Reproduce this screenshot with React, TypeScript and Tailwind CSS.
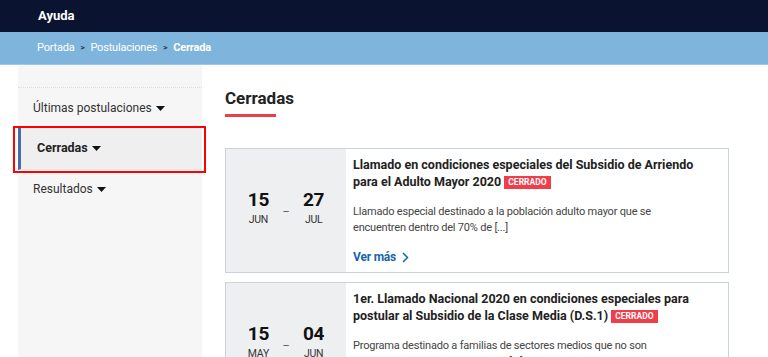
import React from 'react'

const font = { fontFamily: 'Roboto, "Noto Sans", sans-serif' }

type Llamado = {
  from: [string, string]
  to: [string, string]
  title: string[]
  text: string[]
}

const llamados: Llamado[] = [
  {
    from: ['15', 'JUN'],
    to: ['27', 'JUL'],
    title: ['Llamado en condiciones especiales del Subsidio de Arriendo', 'para el Adulto Mayor 2020'],
    text: ['Llamado especial destinado a la población adulto mayor que se', 'encuentren dentro del 70% de [...]'],
  },
  {
    from: ['15', 'MAY'],
    to: ['04', 'JUN'],
    title: ['1er. Llamado Nacional 2020 en condiciones especiales para', 'postular al Subsidio de la Clase Media (D.S.1)'],
    text: ['Programa destinado a familias de sectores medios que no son', 'propietarios de una vivienda, que [...]'],
  },
]

function Caret() {
  return (
    <svg width="9" height="5" viewBox="0 0 9 5" className="ml-[4px] inline-block">
      <path d="M0 0h9L4.5 5z" fill="#111" />
    </svg>
  )
}

function DateBox({ d }: { d: [string, string] }) {
  return (
    <div className="flex flex-col items-center w-[30px]">
      <span className="text-[19px] font-bold leading-[20px] text-[#111] tracking-[-0.3px]">{d[0]}</span>
      <span className="text-[10.5px] leading-[14px] text-[#333] mt-[3px] tracking-[-0.3px]">{d[1]}</span>
    </div>
  )
}

function Card({ item }: { item: Llamado }) {
  return (
    <div className="flex border border-[#c9d3de] mb-[9px]">
      <div className="w-[120px] shrink-0 bg-[#eeeff1] flex items-center justify-center gap-[9px] pb-[4px]">
        <DateBox d={item.from} />
        <span className="text-[11px] text-[#555] mt-[8px]">–</span>
        <DateBox d={item.to} />
      </div>
      <div className="pl-[7px] pt-[7px] pb-[6px] pr-[10px]">
        <h3 className="text-[12.5px] font-bold leading-[17px] text-[#222]">
          {item.title[0]}
          <br />
          {item.title[1]}{' '}
          <span className="inline-block align-[1px] bg-[#ef3e4a] text-white text-[8.5px] font-bold px-[4px] leading-[13px]">
            CERRADO
          </span>
        </h3>
        <p className="mt-[14px] text-[11px] leading-[16px] text-[#444] tracking-[-0.2px]">
          {item.text[0]}
          <br />
          {item.text[1]}
        </p>
        <a className="mt-[12px] flex items-center text-[12px] font-bold text-[#1366b0] tracking-[-0.2px]">
          Ver más
          <svg width="7" height="11" viewBox="0 0 7 11" className="ml-[6px]">
            <path d="M1 1l4.5 4.5L1 10" stroke="#1366b0" strokeWidth="1.5" fill="none" />
          </svg>
        </a>
      </div>
    </div>
  )
}

export default function App() {
  return (
    <div className="h-screen bg-white overflow-hidden" style={font}>
      {/* Header */}
      <header className="h-[32px] bg-[#0a1330] flex items-center pl-[38px]">
        <span className="text-white font-bold text-[13px]">Ayuda</span>
      </header>

      {/* Breadcrumb */}
      <nav className="h-[33px] bg-[#7fb5dc] border-b border-[#9cc8e8] flex items-center pl-[37px] text-[11px] text-white tracking-[-0.2px]">
        <span>Portada</span>
        <span className="mx-[6px] text-[#1d2b4a] text-[8px] font-bold">&gt;</span>
        <span>Postulaciones</span>
        <span className="mx-[6px] text-[#1d2b4a] text-[8px] font-bold">&gt;</span>
        <span className="font-bold">Cerrada</span>
      </nav>

      <div className="flex pl-[18px]">
        {/* Sidebar */}
        <aside className="w-[184px] shrink-0 bg-[#f6f6f6] min-h-[292px]">
          <div className="h-[23px] border-b border-dotted border-[#dcdcdc]" />
          <div className="h-[40px] flex items-center pl-[15px] text-[12px] text-[#333]">
            Últimas postulaciones
            <Caret />
          </div>
          <div className="relative h-[42px] flex items-center pl-[19px] bg-[#efeff0] border-l-[3px] border-[#4a6aa8] border-b border-b-[#e4e4e4] text-[12.5px] font-bold text-[#222]">
            <span className="-ml-[3px]">Cerradas</span>
            <Caret />
            <div className="absolute -left-[8px] -right-[4px] -top-[2px] -bottom-[4px] border-2 border-[#ff0000]" />
          </div>
          <div className="h-[38px] flex items-center pl-[15px] text-[12px] text-[#333]">
            Resultados
            <Caret />
          </div>
        </aside>

        {/* Main */}
        <main className="flex-1 pl-[23px] pr-[39px]">
          <h2 className="mt-[22px] text-[17px] font-bold leading-[22px] text-[#222]">Cerradas</h2>
          <div className="mt-[5px] w-[51px] h-[3px] bg-[#e8414c]" />
          <div className="mt-[31px]">
            {llamados.map((item, i) => (
              <Card key={i} item={item} />
            ))}
          </div>
        </main>
      </div>
    </div>
  )
}
